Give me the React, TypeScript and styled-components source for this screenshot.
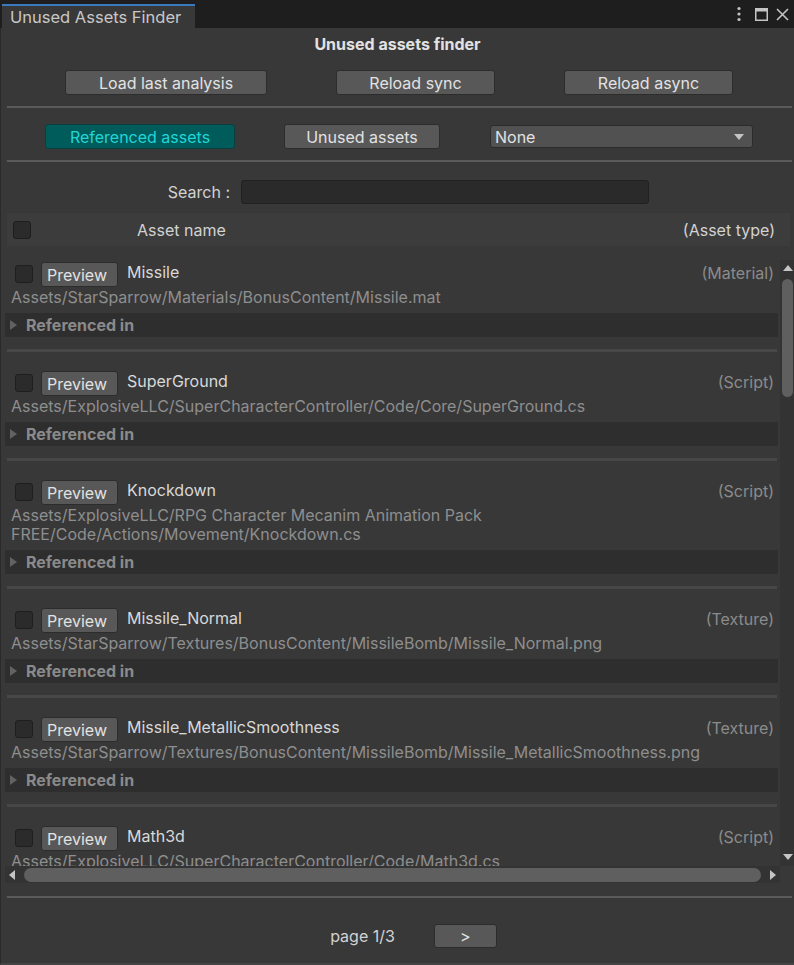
import React from 'react';
import styled, { createGlobalStyle } from 'styled-components';

const GlobalStyle = createGlobalStyle`
    html, body {
        margin: 0;
        padding: 0;
        background: #383838;
    }
    * {
        box-sizing: border-box;
    }
    body {
        font-family: Inter, "Noto Sans", "DejaVu Sans", sans-serif;
        font-size: 16px;
        color: #d2d2d2;
    }
`;

const Window = styled.div`
    width: 794px;
    height: 965px;
    display: flex;
    flex-direction: column;
    background: #383838;
    overflow: hidden;
`;

const TitleBar = styled.div`
    height: 28px;
    flex: none;
    display: flex;
    align-items: flex-end;
    background: #1e1e1e;
    padding-left: 2px;
`;

const Tab = styled.div`
    width: 193px;
    height: 24px;
    display: flex;
    align-items: center;
    padding-left: 8px;
    background: #383838;
    border-top: 2px solid #3a79bb;
    color: #c8c8c8;
    font-size: 16.5px;
`;

const WindowIcons = styled.div`
    margin-left: auto;
    align-self: center;
    display: flex;
    align-items: center;
    gap: 8px;
    padding-right: 5px;
    color: #c4c4c4;
`;

const Body = styled.div`
    flex: 1;
    display: flex;
    flex-direction: column;
    border-left: 1px solid #2a2a2a;
    border-bottom: 2px solid #454545;
`;

const Heading = styled.div`
    margin-top: 6px;
    height: 20px;
    line-height: 20px;
    text-align: center;
    font-weight: 700;
    color: #e2e2e2;
`;

const ButtonRow = styled.div`
    margin-top: 16px;
    display: flex;
    gap: 69px;
    padding-left: 64px;
`;

const Button = styled.div<{ $active?: boolean; $width: number; $height?: number }>`
    width: ${(p) => p.$width}px;
    height: ${(p) => p.$height ?? 25}px;
    display: flex;
    align-items: center;
    justify-content: center;
    border-radius: 3px;
    border: 1px solid ${(p) => (p.$active ? '#0b3f3f' : '#2c2c2c')};
    background: ${(p) => (p.$active ? '#005b5b' : '#585858')};
    color: ${(p) => (p.$active ? '#20d6d6' : '#e2e2e2')};
    white-space: nowrap;
`;

const Separator = styled.div<{ $top: number }>`
    margin: ${(p) => p.$top}px 2px 0 6px;
    height: 2px;
    background: #5a5a5a;
    flex: none;
`;

const FilterRow = styled.div`
    margin-top: 16px;
    height: 26px;
    display: flex;
    align-items: flex-start;
    gap: 49px;
    padding-left: 44px;
`;

const Dropdown = styled.div`
    margin-top: 1px;
    margin-left: 1px;
    width: 263px;
    height: 23px;
    display: flex;
    align-items: center;
    justify-content: space-between;
    padding: 0 8px 0 4px;
    border-radius: 3px;
    border: 1px solid #2c2c2c;
    background: #515151;
    color: #e2e2e2;
`;

const SearchRow = styled.div`
    margin-top: 18px;
    display: grid;
    grid-template-columns: 229px 408px;
    column-gap: 11px;
    align-items: center;
`;

const SearchLabel = styled.div`
    text-align: right;
    color: #d2d2d2;
`;

const SearchInput = styled.div`
    height: 24px;
    border-radius: 3px;
    border: 1px solid #212121;
    background: #2a2a2a;
`;

const HeaderRow = styled.div`
    margin: 9px 4px 0 6px;
    height: 33px;
    display: flex;
    align-items: center;
    padding: 0 15px 0 6px;
    background: #3c3c3c;
`;

const HeaderLabel = styled.div<{ $grow?: boolean }>`
    color: #d2d2d2;
    margin-left: ${(p) => (p.$grow ? '106px' : 'auto')};
`;

const Checkbox = styled.div`
    width: 18px;
    height: 18px;
    flex: none;
    border-radius: 3px;
    border: 1px solid #1e1e1e;
    background: #2b2b2b;
`;

const ListView = styled.div`
    margin: 12px 0 0 4px;
    height: 625px;
    display: grid;
    grid-template-columns: 775px 15px;
    grid-template-rows: 608px 17px;
`;

const ListContent = styled.div`
    overflow: hidden;
    padding-top: 3px;
`;

const VScroll = styled.div`
    margin-top: 2px;
    background: #333333;
    display: flex;
    flex-direction: column;
    align-items: center;
`;

const ArrowUp = styled.div<{ $down?: boolean }>`
    width: 0;
    height: 0;
    border-left: 5px solid transparent;
    border-right: 5px solid transparent;
    ${(p) =>
        p.$down
            ? 'border-top: 6px solid #c4c4c4; margin-top: auto; margin-bottom: 6px;'
            : 'border-bottom: 6px solid #c4c4c4; margin-top: 5px;'}
`;

const VThumb = styled.div`
    margin-top: 8px;
    width: 11px;
    height: 118px;
    border-radius: 6px;
    background: #5f5f5f;
`;

const HScroll = styled.div`
    display: flex;
    align-items: center;
    padding: 0 4px;
    background: #333333;
`;

const ArrowSide = styled.div<{ $right?: boolean }>`
    width: 0;
    height: 0;
    border-top: 5px solid transparent;
    border-bottom: 5px solid transparent;
    ${(p) =>
        p.$right
            ? 'border-left: 6px solid #c4c4c4; margin-left: 9px;'
            : 'border-right: 6px solid #c4c4c4; margin-right: 9px;'}
`;

const HThumb = styled.div`
    flex: 1;
    height: 14px;
    border-radius: 7px;
    background: #5f5f5f;
`;

const Item = styled.div`
    display: flex;
    flex-direction: column;
`;

const ItemHeader = styled.div`
    height: 26px;
    display: flex;
    align-items: center;
    padding: 0 6px 0 10px;
`;

const PreviewButton = styled.div`
    margin-left: 8px;
    height: 25px;
    width: 77px;
    display: flex;
    align-items: center;
    padding: 2px 0 0 5px;
    border-radius: 3px;
    border: 1px solid #2c2c2c;
    background: #585858;
    color: #e2e2e2;
`;

const AssetName = styled.div`
    margin-left: 9px;
    margin-top: -5px;
    color: #d8d8d8;
`;

const AssetType = styled.div`
    margin-left: auto;
    margin-top: -3px;
    color: #8b8b8b;
`;

const AssetPath = styled.div`
    margin-top: 1px;
    padding: 0 6px;
    line-height: 19px;
    color: #8e8e8e;
`;

const Foldout = styled.div`
    margin: 6px 2px 0 0;
    height: 24px;
    display: flex;
    align-items: center;
    padding-left: 5px;
    background: #2e2e2e;
    color: #8a8a8a;
    font-weight: 700;
`;

const FoldArrow = styled.div`
    width: 0;
    height: 0;
    border-top: 5px solid transparent;
    border-bottom: 5px solid transparent;
    border-left: 7px solid #626262;
    margin-right: 9px;
`;

const ItemDivider = styled.div`
    margin: 12px 3px 18px 2px;
    height: 3px;
    background: #474747;
`;

const Footer = styled.div`
    margin-top: 26px;
    display: flex;
    justify-content: center;
    align-items: center;
    gap: 39px;
    padding-left: 32px;
`;

const PageLabel = styled.div`
    color: #d2d2d2;
`;

const DropArrow = styled.div`
    width: 0;
    height: 0;
    border-left: 5px solid transparent;
    border-right: 5px solid transparent;
    border-top: 6px solid #c4c4c4;
`;

const assets = [
    { name: 'Missile', type: '(Material)', path: 'Assets/StarSparrow/Materials/BonusContent/Missile.mat' },
    { name: 'SuperGround', type: '(Script)', path: 'Assets/ExplosiveLLC/SuperCharacterController/Code/Core/SuperGround.cs' },
    {
        name: 'Knockdown',
        type: '(Script)',
        path: 'Assets/ExplosiveLLC/RPG Character Mecanim Animation Pack FREE/Code/Actions/Movement/Knockdown.cs',
    },
    { name: 'Missile_Normal', type: '(Texture)', path: 'Assets/StarSparrow/Textures/BonusContent/MissileBomb/Missile_Normal.png' },
    {
        name: 'Missile_MetallicSmoothness',
        type: '(Texture)',
        path: 'Assets/StarSparrow/Textures/BonusContent/MissileBomb/Missile_MetallicSmoothness.png',
    },
    { name: 'Math3d', type: '(Script)', path: 'Assets/ExplosiveLLC/SuperCharacterController/Code/Math3d.cs' },
];

const KebabIcon = () => (
    <svg width="4" height="16" viewBox="0 0 4 16">
        <circle cx="2" cy="2.5" r="1.6" fill="currentColor" />
        <circle cx="2" cy="8" r="1.6" fill="currentColor" />
        <circle cx="2" cy="13.5" r="1.6" fill="currentColor" />
    </svg>
);

const MaximizeIcon = () => (
    <svg width="13" height="13" viewBox="0 0 13 13" style={{ marginLeft: 6 }}>
        <rect x="0.75" y="0.75" width="11.5" height="11.5" fill="none" stroke="currentColor" strokeWidth="1.5" />
        <rect x="0" y="0" width="13" height="3.5" fill="currentColor" />
    </svg>
);

const CloseIcon = () => (
    <svg width="13" height="13" viewBox="0 0 13 13">
        <path d="M1 1 L12 12 M12 1 L1 12" stroke="currentColor" strokeWidth="1.6" />
    </svg>
);

const App = () => {
    return (
        <>
            <GlobalStyle />
            <Window>
                <TitleBar>
                    <Tab>Unused Assets Finder</Tab>
                    <WindowIcons>
                        <KebabIcon />
                        <MaximizeIcon />
                        <CloseIcon />
                    </WindowIcons>
                </TitleBar>
                <Body>
                    <Heading>Unused assets finder</Heading>
                    <ButtonRow>
                        <Button $width={202}>Load last analysis</Button>
                        <Button $width={159}>Reload sync</Button>
                        <Button $width={169}>Reload async</Button>
                    </ButtonRow>
                    <Separator $top={11} />
                    <FilterRow>
                        <Button $active $width={190}>Referenced assets</Button>
                        <Button $width={156}>Unused assets</Button>
                        <Dropdown>
                            <span>None</span>
                            <DropArrow />
                        </Dropdown>
                    </FilterRow>
                    <Separator $top={10} />
                    <SearchRow>
                        <SearchLabel>Search :</SearchLabel>
                        <SearchInput />
                    </SearchRow>
                    <HeaderRow>
                        <Checkbox />
                        <HeaderLabel $grow>Asset name</HeaderLabel>
                        <HeaderLabel>(Asset type)</HeaderLabel>
                    </HeaderRow>
                    <ListView>
                        <ListContent>
                            {assets.map((asset, i) => (
                                <Item key={asset.path}>
                                    <ItemHeader>
                                        <Checkbox />
                                        <PreviewButton>Preview</PreviewButton>
                                        <AssetName>{asset.name}</AssetName>
                                        <AssetType>{asset.type}</AssetType>
                                    </ItemHeader>
                                    <AssetPath>{asset.path}</AssetPath>
                                    <Foldout>
                                        <FoldArrow />
                                        Referenced in
                                    </Foldout>
                                    {i < assets.length - 1 && <ItemDivider />}
                                </Item>
                            ))}
                        </ListContent>
                        <VScroll>
                            <ArrowUp />
                            <VThumb />
                            <ArrowUp $down />
                        </VScroll>
                        <HScroll>
                            <ArrowSide />
                            <HThumb />
                            <ArrowSide $right />
                        </HScroll>
                    </ListView>
                    <Separator $top={13} />
                    <Footer>
                        <PageLabel>page 1/3</PageLabel>
                        <Button $width={63} $height={24}>&gt;</Button>
                    </Footer>
                </Body>
            </Window>
        </>
    );
};

export default App;
